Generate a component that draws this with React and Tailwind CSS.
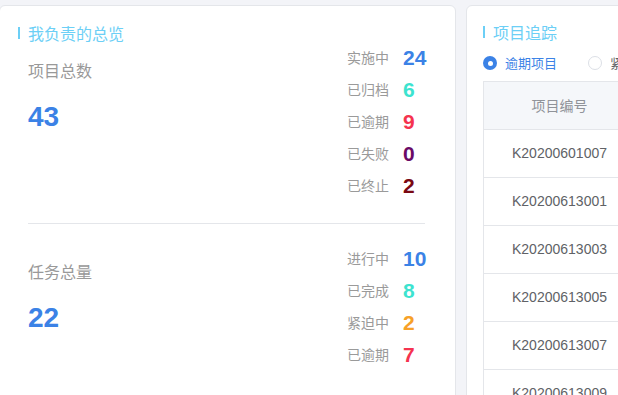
import React from 'react';

const projectStats = [
  { label: '实施中', value: 24, color: 'text-[#3b82e6]' },
  { label: '已归档', value: 6, color: 'text-[#3de3cf]' },
  { label: '已逾期', value: 9, color: 'text-[#f5334f]' },
  { label: '已失败', value: 0, color: 'text-[#6a0a66]' },
  { label: '已终止', value: 2, color: 'text-[#7a0812]' },
];

const taskStats = [
  { label: '进行中', value: 10, color: 'text-[#3b82e6]' },
  { label: '已完成', value: 8, color: 'text-[#3de3cf]' },
  { label: '紧迫中', value: 2, color: 'text-[#f7a128]' },
  { label: '已逾期', value: 7, color: 'text-[#f5334f]' },
];

const codes = ['K20200601007', 'K20200613001', 'K20200613003', 'K20200613005', 'K20200613007', 'K20200613009'];

const cn = { fontFamily: '"Noto Sans CJK SC", "Liberation Sans", sans-serif' };
const num = { fontFamily: '"Liberation Sans", Arial, sans-serif' };

function CardTitle({ children }) {
  return (
    <div className="flex items-center h-5">
      <span className="w-[2px] h-3 bg-[#6ccff6] mr-2"></span>
      <span className="text-[16px] text-[#6ccff6] leading-5">{children}</span>
    </div>
  );
}

function StatList({ items }) {
  return (
    <div className="flex flex-col">
      {items.map((it, i) => (
        <div key={i} className="flex items-center h-8">
          <span className="text-[14px] text-[#9a9a9a] w-[60px] text-right">{it.label}</span>
          <span className={`ml-[14px] w-[36px] text-[21px] font-bold leading-none ${it.color}`} style={num}>{it.value}</span>
        </div>
      ))}
    </div>
  );
}

function Summary({ title, total, items, className }) {
  return (
    <div className={`flex justify-between pl-[28px] pr-[16px] ${className}`}>
      <div className="pt-[19px]">
        <div className="text-[16px] text-[#999] leading-5">{title}</div>
        <div className="mt-[21px] text-[28px] font-bold text-[#3b82e6] leading-8" style={num}>{total}</div>
      </div>
      <StatList items={items} />
    </div>
  );
}

export default function App() {
  return (
    <div className="w-[618px] h-[395px] overflow-hidden bg-[#f3f4f8] flex gap-[10px] pt-[5px]" style={cn}>
      <div className="w-[457px] -ml-px shrink-0 bg-white border border-[#e4e6ea] rounded-[6px] h-[400px]">
        <div className="pl-[18px] pt-[17px]">
          <CardTitle>我负责的总览</CardTitle>
        </div>
        <Summary title="项目总数" total={43} items={projectStats} className="-mt-[2px]" />
        <div className="ml-[28px] mr-[30px] mt-[22px] mb-[18px] h-px bg-[#e4e6ea]"></div>
        <Summary title="任务总量" total={22} items={taskStats} className="" />
      </div>

      <div className="w-[400px] shrink-0 bg-white border border-[#e4e6ea] rounded-[6px] h-[400px] pl-[16px]">
        <div className="pt-[16px]">
          <CardTitle>项目追踪</CardTitle>
        </div>
        <div className="flex items-center mt-[11px] h-5">
          <span className="w-[14px] h-[14px] rounded-full bg-[#3b82e6] flex items-center justify-center">
            <span className="w-[5px] h-[5px] rounded-full bg-white"></span>
          </span>
          <span className="ml-[8px] text-[13px] text-[#3b82e6]">逾期项目</span>
          <span className="ml-[31px] w-[14px] h-[14px] rounded-full border border-[#dcdfe6] bg-white"></span>
          <span className="ml-[8px] text-[13px] text-[#606266]">紧迫项目</span>
        </div>
        <div className="mt-[8px] border-l border-t border-[#e4e6ea] w-[300px]">
          <div className="h-[48px] bg-[#f5f7fa] border-b border-[#e4e6ea] flex">
            <div className="w-[152px] flex items-center justify-center text-[14px] text-[#909399] border-r border-[#e4e6ea]">项目编号</div>
          </div>
          {codes.map((c) => (
            <div key={c} className="h-[48px] border-b border-[#e4e6ea] flex">
              <div className="w-[152px] flex items-center justify-center text-[14px] text-[#606266] border-r border-[#e4e6ea]" style={num}>{c}</div>
            </div>
          ))}
        </div>
      </div>
    </div>
  );
}
